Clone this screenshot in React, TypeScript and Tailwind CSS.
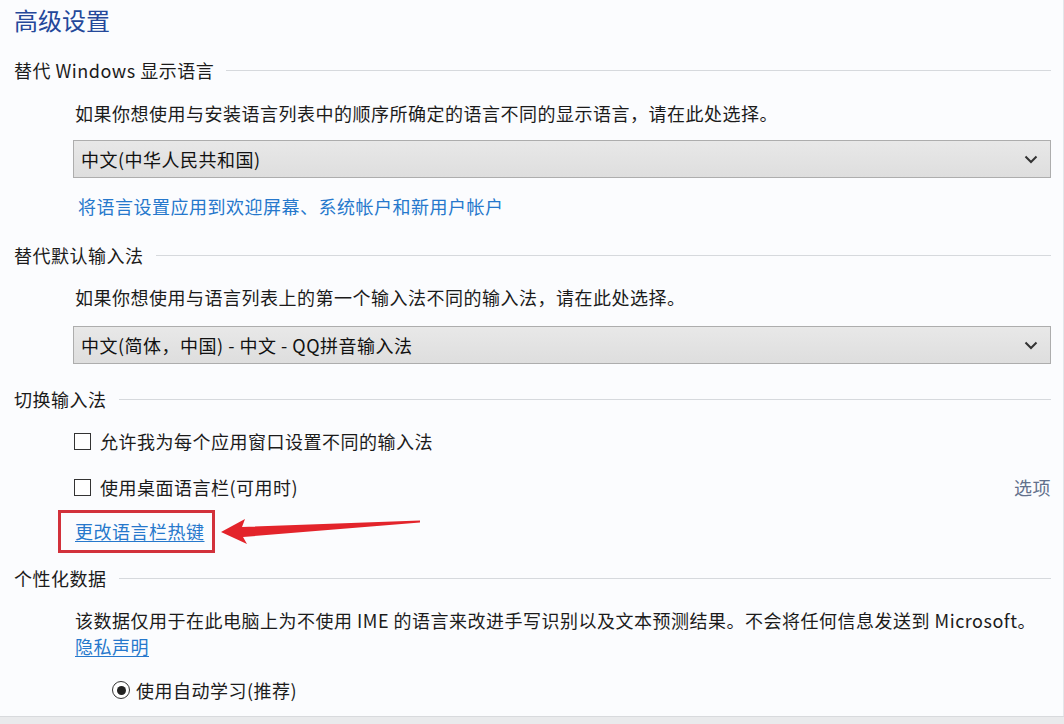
import React from "react";

const font = { fontFamily: '"Noto Sans CJK SC", "Noto Sans", sans-serif' };

function SectionHeader({ title }: { title: string }) {
  return (
    <div className="flex h-[30px] items-center gap-3 pr-[12px]">
      <span className="text-[18px] text-[#1b1b1b]">{title}</span>
      <div className="h-px flex-1 bg-[#d6d9dd]" />
    </div>
  );
}

function Dropdown({ value }: { value: string }) {
  return (
    <div className="ml-[59px] mr-[12px] flex h-[38px] items-center justify-between border border-[#adadad] bg-gradient-to-b from-[#e8e8e8] to-[#dedede] pl-[7px] pr-[12px]">
      <span className="text-[18px] text-[#111]">{value}</span>
      <svg width="14" height="9" viewBox="0 0 14 9">
        <path d="M1.5 1.5 L7 7 L12.5 1.5" fill="none" stroke="#333" strokeWidth="2" />
      </svg>
    </div>
  );
}

function Checkbox({ label }: { label: string }) {
  return (
    <div className="ml-[60px] flex h-[30px] items-center gap-[9px]">
      <div className="h-[17px] w-[17px] border-[1.5px] border-[#333] bg-white" />
      <span className="text-[18px] text-[#1b1b1b]">{label}</span>
    </div>
  );
}

export default function App() {
  return (
    <div className="flex h-[724px] w-[1064px] flex-col bg-[#fbfcfe] tracking-[0.5px]" style={font}>
      <div className="flex flex-1 flex-col border-r border-[#e4e6ea] pl-[14px]">
        <div className="flex h-[40px] items-center">
          <h1 className="text-[24px] tracking-normal text-[#24489a]">高级设置</h1>
        </div>

        <div className="mt-[15px]">
          <SectionHeader title="替代 Windows 显示语言" />
        </div>
        <div className="mt-[13px] flex h-[30px] items-center pl-[61px] text-[18px] text-[#1b1b1b]">
          如果你想使用与安装语言列表中的顺序所确定的语言不同的显示语言，请在此处选择。
        </div>
        <div className="mt-[12px]">
          <Dropdown value="中文(中华人民共和国)" />
        </div>
        <div className="mt-[13px] flex h-[30px] items-center pl-[64px] text-[18px] text-[#2678cc]">
          将语言设置应用到欢迎屏幕、系统帐户和新用户帐户
        </div>

        <div className="mt-[19px]">
          <SectionHeader title="替代默认输入法" />
        </div>
        <div className="mt-[12px] flex h-[30px] items-center pl-[61px] text-[18px] text-[#1b1b1b]">
          如果你想使用与语言列表上的第一个输入法不同的输入法，请在此处选择。
        </div>
        <div className="mt-[14px]">
          <Dropdown value="中文(简体，中国) - 中文 - QQ拼音输入法" />
        </div>

        <div className="mt-[20px]">
          <SectionHeader title="切换输入法" />
        </div>
        <div className="mt-[12px]">
          <Checkbox label="允许我为每个应用窗口设置不同的输入法" />
        </div>
        <div className="mt-[16px] flex items-center justify-between pr-[12px]">
          <Checkbox label="使用桌面语言栏(可用时)" />
          <span className="text-[18px] text-[#62708c]">选项</span>
        </div>

        <div className="relative mt-[8px] h-[43px]">
          <div className="ml-[44px] flex h-[43px] w-[157px] items-center border-[3px] border-[#d2313b] pl-[14px]">
            <span className="text-[18px] text-[#2678cc] underline underline-offset-2">更改语言栏热键</span>
          </div>
          <svg className="absolute left-[201px] top-0" width="210" height="40" viewBox="0 0 210 40">
            <polygon
              points="6,22 30,9 27,17 205,10.5 205,12.5 28,27 32,34"
              fill="#e3242b"
            />
          </svg>
        </div>

        <div className="mt-[10px]">
          <SectionHeader title="个性化数据" />
        </div>
        <div className="mt-[14px] flex h-[26px] items-center whitespace-nowrap pl-[61px] text-[18px] text-[#1b1b1b]">
          该数据仅用于在此电脑上为不使用 IME 的语言来改进手写识别以及文本预测结果。不会将任何信息发送到 Microsoft。
        </div>
        <div className="flex h-[26px] items-center pl-[61px]">
          <span className="text-[18px] text-[#2678cc] underline underline-offset-2">隐私声明</span>
        </div>
        <div className="mt-[16px] flex h-[30px] items-center gap-[6px] pl-[98px]">
          <div className="flex h-[18px] w-[18px] items-center justify-center rounded-full border-[1.5px] border-[#333] bg-white">
            <div className="h-[9px] w-[9px] rounded-full bg-[#222]" />
          </div>
          <span className="text-[18px] text-[#1b1b1b]">使用自动学习(推荐)</span>
        </div>
      </div>
      <div className="h-[8px] border-t border-[#d8dadd] bg-[#e9eaec]" />
    </div>
  );
}
